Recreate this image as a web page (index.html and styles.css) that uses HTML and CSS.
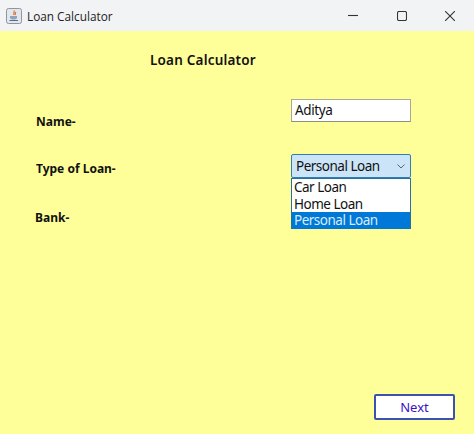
FILE: index.html
```html
<!DOCTYPE html>
<html lang="en">
<head>
    <meta charset="UTF-8">
    <meta name="viewport" content="width=device-width, initial-scale=1.0">
    <title>Loan Calculator</title>
    <link rel="stylesheet" href="styles.css">
</head>
<body>
    <div class="window">
        <div class="titlebar">
            <svg class="java-icon" width="16" height="16" viewBox="0 0 16 16">
                <rect x="0.5" y="0.5" width="15" height="15" rx="2" fill="#e3e6ea" stroke="#8b95a3"/>
                <path d="M8 2.500c1 1.500-1 2.500 0 4.500M9.500 4c.5 1-.8 1.800 0 3" fill="none" stroke="#d8743a" stroke-width="1.200"/>
                <path d="M4 8h7v1.500c0 1.500-1.500 2-3.500 2S4 11 4 9.500z" fill="#8fa3ba"/>
                <path d="M3.500 12.500h8.500" stroke="#4f6f94" stroke-width="1"/>
            </svg>
            <span class="window-title">Loan Calculator</span>
            <div class="window-controls">
                <svg width="10" height="10" viewBox="0 0 10 10"><path d="M0 4.500h10" stroke="#333" stroke-width="1.100"/></svg>
                <svg width="10" height="10" viewBox="0 0 10 10"><rect x="0.500" y="0.500" width="9" height="9" rx="1.500" fill="none" stroke="#333" stroke-width="1.100"/></svg>
                <svg width="10" height="10" viewBox="0 0 10 10"><path d="M0 0l10 10M10 0L0 10" stroke="#333" stroke-width="1.100"/></svg>
            </div>
        </div>

        <div class="content">
            <h1 class="heading">Loan Calculator</h1>

            <div class="form-row name-row">
                <label class="field-label">Name-</label>
                <div class="text-input">Aditya</div>
            </div>

            <div class="form-row loan-row">
                <label class="field-label">Type of Loan-</label>
                <div class="combo">
                    <div class="combo-box">
                        <span>Personal Loan</span>
                        <svg width="8" height="5" viewBox="0 0 8 5"><path d="M.5 .5L4 4l3.500-3.500" fill="none" stroke="#5a6670" stroke-width="1"/></svg>
                    </div>
                    <ul class="combo-list">
                        <li>Car Loan</li>
                        <li>Home Loan</li>
                        <li class="selected">Personal Loan</li>
                    </ul>
                </div>
            </div>

            <div class="form-row bank-row">
                <label class="field-label">Bank-</label>
            </div>

            <div class="actions">
                <button class="next-btn">Next</button>
            </div>
        </div>
    </div>
</body>
</html>
```

FILE: styles.css
```css
html, body {
    height: 100%;
}

body {
    margin: 0;
    background-color: #ffff99;
    font-family: "Noto Sans", Arial, sans-serif;
    color: #111;
}

.window {
    height: 434px;
    display: flex;
    flex-direction: column;
}

.titlebar {
    height: 31px;
    box-sizing: border-box;
    background-color: #f2f3f5;
    display: flex;
    align-items: center;
    padding-left: 6px;
}

.java-icon {
    margin-right: 5px;
}

.window-title {
    font-family: "Open Sans", Arial, sans-serif;
    font-size: 11.800px;
    color: #222;
}

.window-controls {
    margin-left: auto;
    display: flex;
    gap: 38.500px;
    padding-right: 19px;
}

.content {
    flex-grow: 1;
    display: flex;
    flex-direction: column;
    padding: 0 19px 14px 36px;
}

.heading {
    margin: 19px 0 0 114px;
    font-size: 13.500px;
    line-height: 20px;
    font-weight: 600;
    letter-spacing: 0.2px;
}

.form-row {
    display: flex;
    justify-content: space-between;
    width: 375px;
}

.field-label {
    font-size: 12px;
    font-weight: 700;
    line-height: 18px;
}

.name-row {
    margin-top: 29px;
    height: 24px;
}

.name-row .field-label {
    margin-top: 14px;
}

.text-input {
    width: 120px;
    height: 23px;
    box-sizing: border-box;
    background-color: #fff;
    border: 1px solid #a9a998;
    border-bottom-color: #8f8f80;
    padding-left: 3px;
    font-size: 13.500px;
    letter-spacing: -0.4px;
    line-height: 21px;
}

.loan-row {
    margin-top: 31px;
    height: 24px;
}

.loan-row .field-label {
    margin-top: 6px;
}

.combo {
    width: 120px;
    position: relative;
}

.combo-box {
    height: 24px;
    box-sizing: border-box;
    background-color: #cce4f7;
    border: 1px solid #2f7fb5;
    border-radius: 2px;
    display: flex;
    align-items: center;
    justify-content: space-between;
    padding: 0 5px 0 4px;
    font-size: 13.500px;
    letter-spacing: -0.5px;
}

/* popup sits over the form */
.combo-list {
    position: absolute;
    top: 24px;
    left: 0;
    width: 100%;
    box-sizing: border-box;
    margin: 0;
    padding: 0;
    list-style: none;
    background-color: #fff;
    border: 1px solid #2b6f9e;
    border-bottom: none;
    font-size: 13.500px;
    letter-spacing: -0.5px;
    line-height: 16.600px;
}

.combo-list li {
    padding-left: 2px;
}

.combo-list .selected {
    background-color: #0078d7;
    color: #d8ecfb;
}

.bank-row {
    margin-top: 31px;
}

.bank-row .field-label {
    margin-left: -1px;
}

.actions {
    margin-top: auto;
    display: flex;
    justify-content: flex-end;
}

.next-btn {
    width: 81px;
    height: 26px;
    padding: 0;
    background-color: #fff;
    border: 2px solid #3d52b0;
    border-radius: 2px;
    font-family: "Noto Sans", Arial, sans-serif;
    font-size: 13px;
    color: #3a10c8;
}
```
